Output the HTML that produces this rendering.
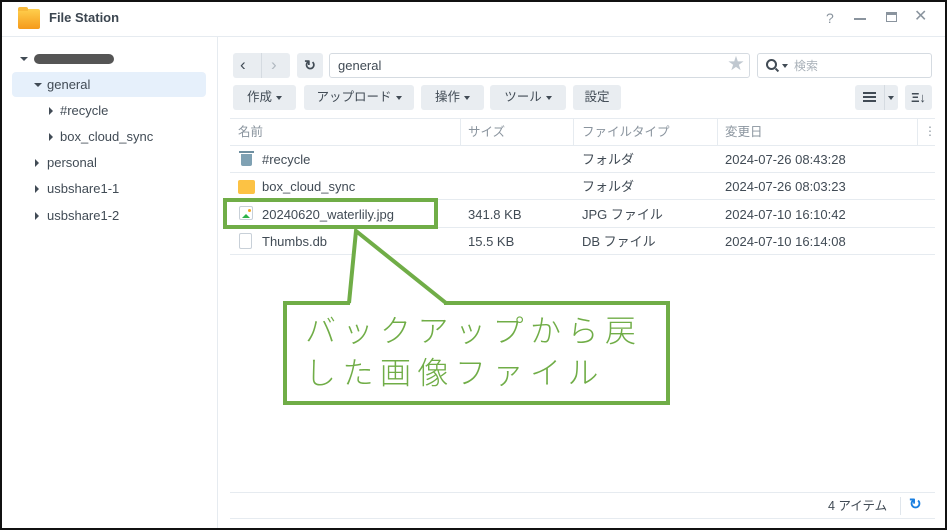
<!DOCTYPE html>
<html><head><meta charset="utf-8"><style>
*{box-sizing:border-box;margin:0;padding:0}
body{width:947px;height:530px;overflow:hidden;background:#fff;font-family:"Liberation Sans","Noto Sans CJK JP",sans-serif;font-size:13px;color:#414b55;position:relative}
.frame{position:absolute;left:0;top:0;width:947px;height:530px;border:2px solid #111;}
.abs{position:absolute}
.btn{position:absolute;background:#e9edf1;border-radius:3px;height:25px;line-height:25px;text-align:center;font-size:12.5px;color:#414b55}
.tri{display:inline-block;width:0;height:0;border-left:3.5px solid transparent;border-right:3.5px solid transparent;border-top:4px solid #414b55;vertical-align:middle;margin-left:4px}
.tr{position:absolute;width:0;height:0;border-top:4px solid transparent;border-bottom:4px solid transparent;border-left:4px solid #414b55}
.td{position:absolute;width:0;height:0;border-left:4px solid transparent;border-right:4px solid transparent;border-top:4px solid #414b55}
.t{position:absolute;font-size:13px;line-height:16px;height:16px;color:#414b55;white-space:nowrap}
.hl{position:absolute;left:230px;width:705px;height:1px;background:#e6ebf0}
</style></head><body>
<!-- title bar -->
<div class="abs" style="left:18px;top:9px;width:22px;height:20px;border-radius:2px;background:linear-gradient(#ffcf4d,#f59a1b)"></div>
<div class="abs" style="left:18px;top:7px;width:10px;height:4px;background:#f8b93a;border-radius:2px 2px 0 0"></div>
<div class="t" style="left:49px;top:10px;font-weight:bold;font-size:13px;color:#3c4650">File Station</div>
<div class="t" style="left:826px;top:10px;color:#8a949e;font-size:14px">?</div>
<div class="abs" style="left:854px;top:18px;width:12px;height:2px;background:#8a949e"></div>
<div class="abs" style="left:886px;top:12px;width:11px;height:10px;border:1.5px solid #8a949e;border-top-width:3px"></div>
<div class="t" style="left:914px;top:9px;color:#8a949e;font-size:16px">✕</div>
<div class="abs" style="left:0;top:36px;width:947px;height:1px;background:#e6ebf0"></div>
<!-- sidebar -->
<div class="abs" style="left:217px;top:37px;width:1px;height:493px;background:#e6ebf0"></div>
<div class="td" style="left:20px;top:57px"></div>
<div class="abs" style="left:34px;top:54px;width:80px;height:10px;background:#555;border-radius:5px"></div>
<div class="abs" style="left:12px;top:72px;width:194px;height:25px;background:#e6f0fb;border-radius:4px"></div>
<div class="td" style="left:34px;top:83px"></div>
<div class="t" style="left:47px;top:77px">general</div>
<div class="tr" style="left:49px;top:107px"></div><div class="t" style="left:60px;top:103px">#recycle</div>
<div class="tr" style="left:49px;top:133px"></div><div class="t" style="left:60px;top:129px">box_cloud_sync</div>
<div class="tr" style="left:35px;top:159px"></div><div class="t" style="left:47px;top:155px">personal</div>
<div class="tr" style="left:35px;top:185px"></div><div class="t" style="left:47px;top:181px">usbshare1-1</div>
<div class="tr" style="left:35px;top:212px"></div><div class="t" style="left:47px;top:208px">usbshare1-2</div>
<!-- toolbar -->
<div class="btn" style="left:233px;top:53px;width:57px"></div>
<div class="abs" style="left:261px;top:53px;width:1px;height:25px;background:#d5dbe1"></div>
<div class="t" style="left:240px;top:57px;font-size:17px;color:#414b55">‹</div>
<div class="t" style="left:271px;top:57px;font-size:17px;color:#b0b8c0">›</div>
<div class="btn" style="left:297px;top:53px;width:26px;font-size:14px;font-weight:bold">↻</div>
<div class="abs" style="left:329px;top:53px;width:421px;height:25px;border:1px solid #d5dbe1;border-radius:3px"></div>
<div class="t" style="left:338px;top:58px">general</div>
<div class="t" style="left:728px;top:57px;color:#c0c8d0;font-size:16px">★</div>
<div class="abs" style="left:757px;top:53px;width:175px;height:25px;border:1px solid #d5dbe1;border-radius:3px"></div>
<div class="abs" style="left:766px;top:59px;width:11px;height:11px;border:2px solid #414b55;border-radius:50%"></div>
<div class="abs" style="left:775px;top:69px;width:4px;height:2px;background:#414b55;transform:rotate(45deg)"></div>
<div class="td" style="left:782px;top:64px;border-left-width:3px;border-right-width:3px"></div>
<div class="t" style="left:794px;top:58px;color:#a8b0b8;font-size:12px">検索</div>
<div class="btn" style="left:233px;top:85px;width:63px">作成<span class="tri"></span></div>
<div class="btn" style="left:304px;top:85px;width:110px">アップロード<span class="tri"></span></div>
<div class="btn" style="left:421px;top:85px;width:63px">操作<span class="tri"></span></div>
<div class="btn" style="left:490px;top:85px;width:76px">ツール<span class="tri"></span></div>
<div class="btn" style="left:573px;top:85px;width:48px">設定</div>
<div class="btn" style="left:855px;top:85px;width:43px"></div>
<div class="abs" style="left:863px;top:92px;width:13px;height:2px;background:#414b55;box-shadow:0 4px 0 #414b55,0 8px 0 #414b55"></div>
<div class="abs" style="left:884px;top:85px;width:1px;height:25px;background:#d5dbe1"></div>
<div class="td" style="left:888px;top:96px;border-left-width:3px;border-right-width:3px"></div>
<div class="btn" style="left:905px;top:85px;width:27px;font-size:13px;font-weight:bold">Ξ↓</div>
<!-- table -->
<div class="hl" style="top:118px"></div>
<div class="t" style="left:238px;top:124px;color:#8a949e;font-size:12.5px">名前</div>
<div class="t" style="left:468px;top:124px;color:#8a949e;font-size:12.5px">サイズ</div>
<div class="t" style="left:582px;top:124px;color:#8a949e;font-size:12.5px">ファイルタイプ</div>
<div class="t" style="left:725px;top:124px;color:#8a949e;font-size:12.5px">変更日</div>
<div class="t" style="left:924px;top:123px;color:#8a949e;font-size:12px">⋮</div>
<div class="abs" style="left:460px;top:119px;width:1px;height:26px;background:#e6ebf0"></div>
<div class="abs" style="left:573px;top:119px;width:1px;height:26px;background:#e6ebf0"></div>
<div class="abs" style="left:717px;top:119px;width:1px;height:26px;background:#e6ebf0"></div>
<div class="abs" style="left:917px;top:119px;width:1px;height:26px;background:#e6ebf0"></div>
<div class="hl" style="top:145px"></div>
<div class="hl" style="top:172px"></div>
<div class="hl" style="top:199px"></div>
<div class="hl" style="top:227px"></div>
<div class="hl" style="top:254px"></div>
<!-- row icons -->
<div class="abs" style="left:239px;top:151px;width:15px;height:2px;background:#6f8fa0"></div>
<div class="abs" style="left:241px;top:154px;width:11px;height:12px;background:#7fa1b3;border-radius:0 0 2px 2px"></div>
<div class="abs" style="left:238px;top:180px;width:17px;height:14px;background:#fcc244;border-radius:2px"></div>
<div class="abs" style="left:239px;top:206px;width:14px;height:14px;border:1px solid #c8d0d8;border-radius:2px"></div>
<div class="abs" style="left:242px;top:214px;width:0;height:0;border-left:4px solid transparent;border-right:4px solid transparent;border-bottom:4px solid #2db34a"></div>
<div class="abs" style="left:248px;top:209px;width:3px;height:3px;background:#f5a623;border-radius:50%"></div>
<div class="abs" style="left:239px;top:233px;width:13px;height:16px;border:1px solid #c8d0d8;border-radius:2px"></div>
<div class="t" style="left:262px;top:152px">#recycle</div>
<div class="t" style="left:262px;top:179px">box_cloud_sync</div>
<div class="t" style="left:262px;top:207px">20240620_waterlily.jpg</div>
<div class="t" style="left:262px;top:234px">Thumbs.db</div>
<div class="t" style="left:468px;top:207px">341.8 KB</div>
<div class="t" style="left:468px;top:234px">15.5 KB</div>
<div class="t" style="left:582px;top:152px">フォルダ</div>
<div class="t" style="left:582px;top:179px">フォルダ</div>
<div class="t" style="left:582px;top:207px">JPG ファイル</div>
<div class="t" style="left:582px;top:234px">DB ファイル</div>
<div class="t" style="left:725px;top:152px">2024-07-26 08:43:28</div>
<div class="t" style="left:725px;top:179px">2024-07-26 08:03:23</div>
<div class="t" style="left:725px;top:207px">2024-07-10 16:10:42</div>
<div class="t" style="left:725px;top:234px">2024-07-10 16:14:08</div>
<!-- footer -->
<div class="hl" style="top:492px"></div>
<div class="hl" style="top:518px"></div>
<div class="t" style="left:828px;top:498px;font-size:12.5px">4 アイテム</div>
<div class="abs" style="left:900px;top:497px;width:1px;height:18px;background:#e0e6ec"></div>
<div class="t" style="left:909px;top:497px;color:#1a7fe0;font-size:15px;font-weight:bold">↻</div>
<!-- annotation -->
<div class="abs" style="left:223px;top:198px;width:215px;height:31px;border:4px solid #70ad47"></div>
<svg class="abs" style="left:0;top:0" width="947" height="530">
<polygon points="349,303 356,230 363,230 446,303" fill="#fff"/>
<polyline points="349,303 356,231 446,303" fill="none" stroke="#70ad47" stroke-width="4"/>
</svg>
<div class="abs" style="left:283px;top:301px;width:387px;height:104px;border:4px solid #70ad47;border-top:none"></div>
<div class="abs" style="left:283px;top:301px;width:67px;height:4px;background:#70ad47"></div>
<div class="abs" style="left:444px;top:301px;width:226px;height:4px;background:#70ad47"></div>
<div class="abs" style="left:305px;top:308px;font-family:'Noto Sans CJK JP',sans-serif;font-weight:300;font-size:31px;letter-spacing:6.5px;line-height:42px;color:#70ad47;white-space:nowrap">バックアップから戻<br>した画像ファイル</div>
<div class="frame"></div>
</body></html>
